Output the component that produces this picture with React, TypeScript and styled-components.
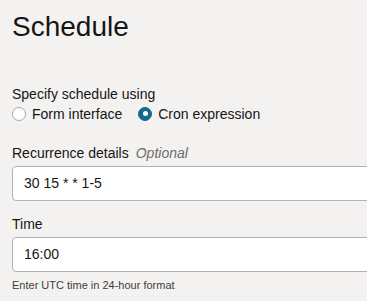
import styled, { createGlobalStyle } from "styled-components";

const GlobalStyle = createGlobalStyle`
  html, body {
    margin: 0;
    padding: 0;
    background: #f3f2f1;
  }

  body {
    font-family: "Liberation Sans", Arial, sans-serif;
    color: #161513;
  }
`;

// the form is wider than the window; the right edge is cut off as in the screenshot
const Page = styled.div`
  width: 100%;
  overflow: hidden;
  padding: 10px 0 0 12px;
  box-sizing: border-box;
`;

const Title = styled.h1`
  margin: 0;
  font-size: 28px;
  font-weight: normal;
  line-height: 1.2;
`;

const Section = styled.div<{ $top: number }>`
  margin-top: ${(p) => p.$top}px;
  width: 400px;
  display: flex;
  flex-direction: column;
`;

const Label = styled.div`
  font-size: 14px;
  line-height: 20px;
  display: flex;
  align-items: baseline;
`;

const Optional = styled.span`
  margin-left: 7px;
  font-style: italic;
  color: #6f6d69;
`;

const RadioGroup = styled.div`
  display: flex;
  align-items: center;
  gap: 16px;
  font-size: 14px;
  line-height: 20px;
`;

const RadioOption = styled.label`
  display: flex;
  align-items: center;
  gap: 6px;
`;

const RadioCircle = styled.span<{ $checked?: boolean }>`
  width: 14px;
  height: 14px;
  box-sizing: border-box;
  border-radius: 50%;
  border: 1px solid ${(p) => (p.$checked ? "#136b8b" : "#a9a7a3")};
  background: ${(p) => (p.$checked ? "#136b8b" : "#ffffff")};
  display: flex;
  align-items: center;
  justify-content: center;

  &::after {
    content: "";
    width: 5px;
    height: 5px;
    border-radius: 50%;
    background: #ffffff;
    display: ${(p) => (p.$checked ? "block" : "none")};
  }
`;

const TextBox = styled.div`
  margin-top: 3px;
  height: 35px;
  box-sizing: border-box;
  border: 1px solid #b4b2ae;
  border-radius: 4px;
  background: #ffffff;
  padding: 0 11px;
  display: flex;
  align-items: center;
  font-size: 14px;
  color: #161513;
`;

const Helper = styled.div`
  margin-top: 5px;
  font-size: 11px;
  line-height: 16px;
  color: #3f3d3a;
`;

export default function App() {
  return (
    <>
      <GlobalStyle />
      <Page>
        <Title>Schedule</Title>

        <Section $top={40}>
          <Label>Specify schedule using</Label>
          <RadioGroup>
            <RadioOption>
              <RadioCircle />
              Form interface
            </RadioOption>
            <RadioOption>
              <RadioCircle $checked />
              Cron expression
            </RadioOption>
          </RadioGroup>
        </Section>

        <Section $top={19}>
          <Label>
            Recurrence details<Optional>Optional</Optional>
          </Label>
          <TextBox>30 15 * * 1-5</TextBox>
        </Section>

        <Section $top={13}>
          <Label>Time</Label>
          <TextBox>16:00</TextBox>
          <Helper>Enter UTC time in 24-hour format</Helper>
        </Section>
      </Page>
    </>
  );
}
